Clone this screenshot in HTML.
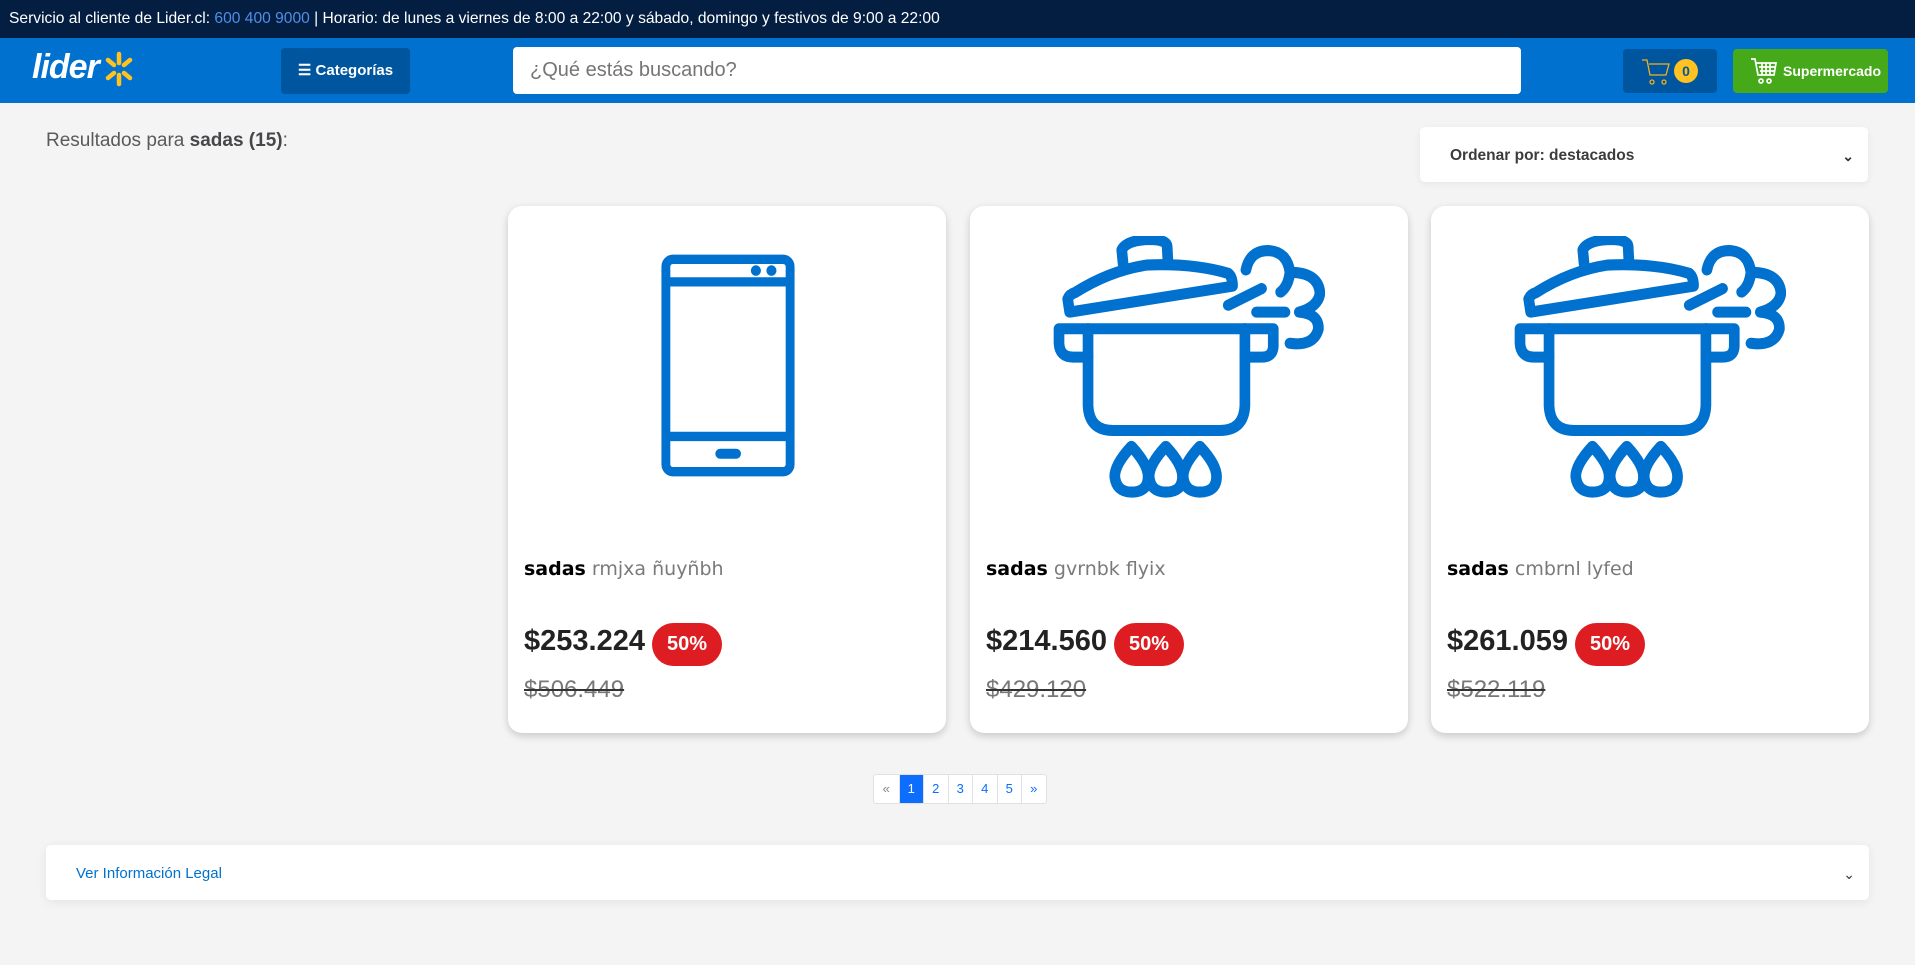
<!DOCTYPE html>
<html><head><meta charset="utf-8"><style>
*{box-sizing:border-box;margin:0;padding:0}
body{width:1915px;height:965px;background:#f4f4f4;font-family:"Liberation Sans",sans-serif;position:relative;overflow:hidden}
.top{position:absolute;left:0;top:0;width:1915px;height:38px;background:#041e42;color:#fff;font-size:15.6px;line-height:38px;padding-left:9px;white-space:nowrap}
.top span{color:#4f8fe6}
.hdr{position:absolute;left:0;top:38px;width:1915px;height:65px;background:#0071ce}
.abs{position:absolute}
.cat{left:281px;top:10px;width:129px;height:46px;background:#00559f;border-radius:4px;color:#fff;font-weight:bold;font-size:15px;line-height:46px;text-align:center}
.search{left:513px;top:9px;width:1008px;height:47px;background:#fff;border-radius:4px;color:#757575;font-size:20px;line-height:47px;padding-left:17px}
.cartb{left:1623px;top:11px;width:94px;height:44px;background:#00559f;border-radius:4px}
.sup{left:1733px;top:11px;width:155px;height:44px;background:#46a91a;border-radius:4px;color:#fff;font-weight:bold;font-size:14px;line-height:44px;padding-left:50px;white-space:nowrap}
.res{left:46px;top:130px;font-size:19px;color:#5a5a5a}
.res b{color:#46474a}
.sort{left:1420px;top:127px;width:448px;height:55px;background:#fff;border-radius:5px;box-shadow:0 2px 8px rgba(0,0,0,.06);font-size:15.5px;font-weight:bold;color:#3c3c3c;line-height:58px;padding-left:30px}
.card{position:absolute;top:206px;width:438px;height:527px;background:#fff;border-radius:14px;box-shadow:0 3px 8px rgba(0,0,0,.18)}
.ttl{position:absolute;left:16px;top:352px;font-size:19px;color:#7a7a7a;font-family:"DejaVu Sans",sans-serif}
.ttl b{color:#000}
.pr{position:absolute;left:16px;top:419px;font-size:29px;font-weight:bold;color:#222}
.bd{position:absolute;left:144px;top:417px;width:70px;height:43px;background:#dd1d21;border-radius:22px;color:#fff;font-weight:bold;font-size:20px;line-height:43px;text-align:center}
.old{position:absolute;left:16px;top:470px;font-size:24px;color:#777;text-decoration:line-through;text-decoration-color:#333}
.pag{left:873px;top:774px;height:30px;display:flex;border:1px solid #dee2e6;border-radius:3px;background:#fff;font-size:13px}
.pag div{width:24.5px;text-align:center;line-height:28px;color:#0d6efd;border-left:1px solid #dee2e6}
.pag div:first-child{border-left:0;color:#888}
.pag .a{background:#0d6efd;color:#fff}
.legal{left:46px;top:845px;width:1823px;height:55px;background:#fff;border-radius:5px;box-shadow:0 2px 10px rgba(0,0,0,.07);color:#0071ce;font-size:15px;line-height:58px;padding-left:30px}
.chev{position:absolute;right:14px;top:0;color:#333;font-size:14px}
</style></head><body>
<div class="top">Servicio al cliente de Lider.cl: <span>600 400 9000</span> | Horario: de lunes a viernes de 8:00 a 22:00 y sábado, domingo y festivos de 9:00 a 22:00</div>
<div class="hdr">
 <div class="abs" style="left:32px;top:10px;color:#fff;font-weight:bold;font-style:italic;font-size:34px;letter-spacing:-1px">lider</div>
 <svg class="abs" style="left:101px;top:13px" width="40" height="38" viewBox="0 0 40 38"><g stroke="#ffc220" stroke-width="4.5" stroke-linecap="round"><line x1="18" y1="3" x2="18" y2="12"/><line x1="18" y1="24" x2="18" y2="33"/><line x1="7" y1="9" x2="13" y2="14"/><line x1="29" y1="9" x2="23" y2="14"/><line x1="7" y1="27" x2="13" y2="22"/><line x1="29" y1="27" x2="23" y2="22"/></g></svg>
 <div class="abs cat">☰ Categorías</div>
 <div class="abs search">¿Qué estás buscando?</div>
 <div class="abs cartb">
  <svg class="abs" style="left:18px;top:9px" width="30" height="28" viewBox="0 0 30 28" fill="none" stroke="#f2b01e" stroke-width="1.3"><path d="M1 2h5l3 15h16l3-11H8"/><circle cx="11" cy="24" r="2"/><circle cx="23" cy="24" r="2"/></svg>
  <div class="abs" style="left:51px;top:10px;width:24px;height:24px;border-radius:12px;background:#ffc220;color:#00559f;font-weight:bold;font-size:14px;text-align:center;line-height:24px">0</div>
 </div>
 <div class="abs sup"><svg class="abs" style="left:17px;top:8px" width="28" height="28" viewBox="0 0 28 28" fill="none" stroke="#fff" stroke-width="1.7"><path d="M1 2h4l3 16h16l2-12H6M9 10h16M10 14h14M12 6v12M16 6v12M20 6v12"/><circle cx="11" cy="24" r="2"/><circle cx="19" cy="24" r="2"/></svg>Supermercado</div>
</div>
<div class="abs res">Resultados para <b>sadas (15)</b>:</div>
<div class="abs sort">Ordenar por: destacados<span class="chev" style="right:14px">&#8964;</span></div>

<div class="card" style="left:508px">
 <svg class="abs" style="left:149px;top:44px" width="142" height="231" viewBox="456 134 448 695" preserveAspectRatio="none" fill="none" stroke="#0071ce" stroke-width="28"><rect x="484" y="162" width="392" height="639" rx="22"/><line x1="484" y1="230" x2="876" y2="230"/><line x1="484" y1="695" x2="876" y2="695"/><circle cx="768" cy="196" r="8" stroke-width="16"/><circle cx="817" cy="196" r="8" stroke-width="16"/><line x1="655" y1="747" x2="706" y2="747" stroke-width="30" stroke-linecap="round"/></svg>
 <div class="ttl"><b>sadas</b> rmjxa ñuyñbh</div>
 <div class="pr">$253.224</div><div class="bd">50%</div>
 <div class="old">$506.449</div>
</div>

<div class="card" style="left:970px">
 <svg class="abs" style="left:83px;top:30px" width="272" height="263" viewBox="280 100 815 760" preserveAspectRatio="none" fill="none" stroke="#0071ce" stroke-width="32" stroke-linecap="round" stroke-linejoin="round"><path d="M490 180L486 140Q500 112 570 110Q620 110 622 130L624 168"/><path d="M330 320L324 282Q330 268 345 264Q450 200 560 184Q700 178 805 208Q818 218 818 245Z"/><path d="M385 368L298 368L298 410Q300 450 340 450L385 450"/><path d="M855 368L940 368L940 420Q938 450 905 450L855 450"/><path d="M385 368L855 368"/><path d="M385 368L385 590Q388 662 460 662L780 662Q852 662 855 590L855 368"/><path d="M805 300L905 252"/><path d="M890 320L975 320"/><path d="M858 198Q870 142 925 142Q982 145 990 205Q1075 205 1080 265Q1075 305 1018 320Q1078 325 1075 370Q1060 420 990 410"/><path d="M990 205Q985 245 962 262"/><path d="M515 708Q465 760 465 795Q470 840 515 840Q565 840 565 795Q565 760 515 708Z"/><path d="M618 708Q568 760 568 795Q572 840 618 840Q668 840 668 795Q668 760 618 708Z"/><path d="M720 708Q670 760 670 795Q674 840 720 840Q770 840 770 795Q770 760 720 708Z"/></svg>
 <div class="ttl"><b>sadas</b> gvrnbk flyix</div>
 <div class="pr">$214.560</div><div class="bd">50%</div>
 <div class="old">$429.120</div>
</div>

<div class="card" style="left:1431px">
 <svg class="abs" style="left:83px;top:30px" width="272" height="263" viewBox="280 100 815 760" preserveAspectRatio="none" fill="none" stroke="#0071ce" stroke-width="32" stroke-linecap="round" stroke-linejoin="round"><path d="M490 180L486 140Q500 112 570 110Q620 110 622 130L624 168"/><path d="M330 320L324 282Q330 268 345 264Q450 200 560 184Q700 178 805 208Q818 218 818 245Z"/><path d="M385 368L298 368L298 410Q300 450 340 450L385 450"/><path d="M855 368L940 368L940 420Q938 450 905 450L855 450"/><path d="M385 368L855 368"/><path d="M385 368L385 590Q388 662 460 662L780 662Q852 662 855 590L855 368"/><path d="M805 300L905 252"/><path d="M890 320L975 320"/><path d="M858 198Q870 142 925 142Q982 145 990 205Q1075 205 1080 265Q1075 305 1018 320Q1078 325 1075 370Q1060 420 990 410"/><path d="M990 205Q985 245 962 262"/><path d="M515 708Q465 760 465 795Q470 840 515 840Q565 840 565 795Q565 760 515 708Z"/><path d="M618 708Q568 760 568 795Q572 840 618 840Q668 840 668 795Q668 760 618 708Z"/><path d="M720 708Q670 760 670 795Q674 840 720 840Q770 840 770 795Q770 760 720 708Z"/></svg>
 <div class="ttl"><b>sadas</b> cmbrnl lyfed</div>
 <div class="pr">$261.059</div><div class="bd">50%</div>
 <div class="old">$522.119</div>
</div>

<div class="abs pag"><div>«</div><div class="a">1</div><div>2</div><div>3</div><div>4</div><div>5</div><div>»</div></div>
<div class="abs legal">Ver Información Legal<span class="chev">&#8964;</span></div>
</body></html>
